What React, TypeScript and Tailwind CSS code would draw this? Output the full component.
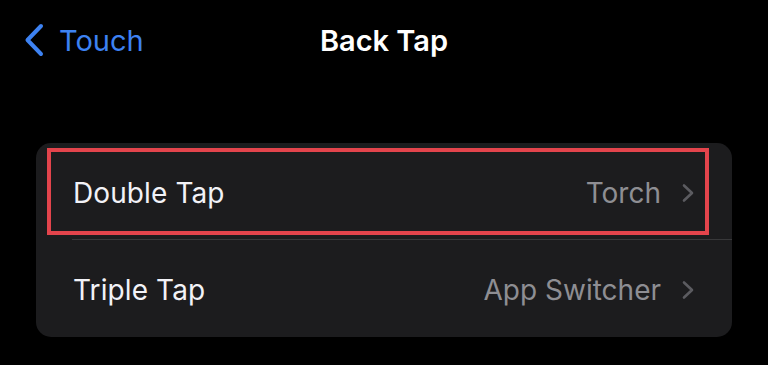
import React from "react";

function Chevron({ className }: { className?: string }) {
  return (
    <svg viewBox="0 0 14 20" className={className} fill="none">
      <path d="M3 2.5 L11 10 L3 17.5" stroke="currentColor" strokeWidth="2.6" strokeLinecap="round" strokeLinejoin="round" />
    </svg>
  );
}

function Row({ label, value, highlight, divider }: { label: string; value: string; highlight?: boolean; divider?: boolean }) {
  return (
    <div className="relative h-[97px] flex items-center pl-[37px] pr-[37px] pt-[2px]">
      <span className="text-[28px] text-[#f2f2f7] tracking-[0.1px] flex-1">{label}</span>
      <span className="text-[28px] text-[#8e8e93] mr-[20px]">{value}</span>
      <Chevron className="w-[14px] h-[20px] text-[#5b5b60]" />
      {divider && <div className="absolute left-[36px] right-0 bottom-0 h-px bg-[#38383a]" />}
      {highlight && (
        <div className="absolute left-[11px] right-[23px] top-[5px] bottom-[5px] border-[4px] border-[#e3444c]" />
      )}
    </div>
  );
}

export default function App() {
  return (
    <div className="w-[768px] h-[365px] bg-black overflow-hidden" style={{ fontFamily: "Inter, 'Noto Sans', sans-serif" }}>
      <div className="relative h-[80px] flex items-center">
        <div className="flex items-center pl-[24px] text-[#3d82f2]">
          <svg viewBox="0 0 20 34" className="w-[20px] h-[34px]" fill="none">
            <path d="M17 3 L3.5 17 L17 31" stroke="currentColor" strokeWidth="4" strokeLinecap="round" strokeLinejoin="round" />
          </svg>
          <span className="ml-[15px] text-[29px] leading-none">Touch</span>
        </div>
        <div className="absolute inset-0 flex items-center justify-center pointer-events-none">
          <span className="text-[29px] font-semibold text-white leading-none">Back Tap</span>
        </div>
      </div>
      <div className="mx-[36px] mt-[63px] rounded-[15px] bg-[#1c1c1e] overflow-hidden">
        <Row label="Double Tap" value="Torch" highlight divider />
        <Row label="Triple Tap" value="App Switcher" />
      </div>
    </div>
  );
}
